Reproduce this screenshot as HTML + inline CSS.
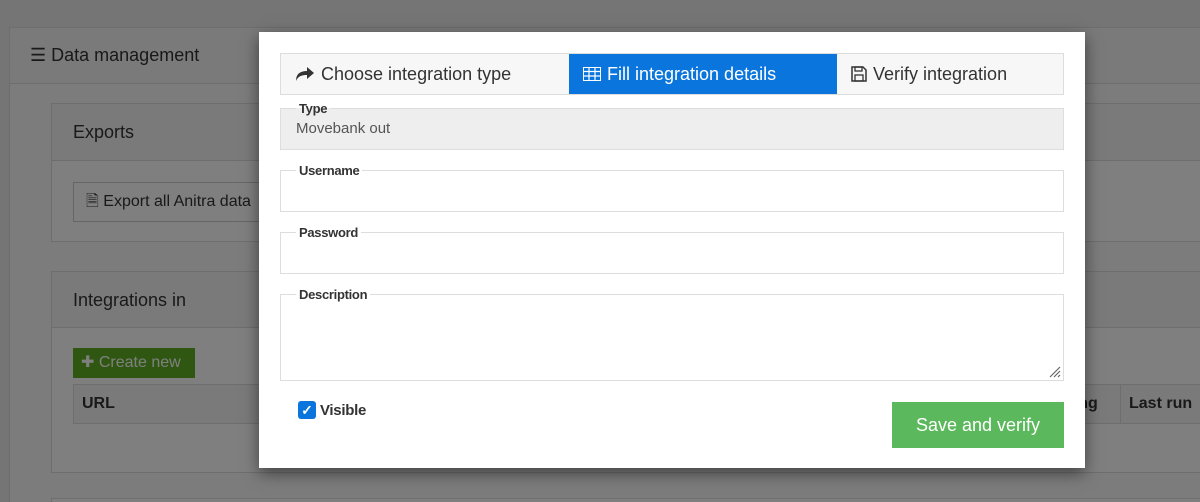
<!DOCTYPE html>
<html style="width:1200px;height:502px;overflow:hidden"><head><style>
*{box-sizing:border-box;margin:0;padding:0}
body{width:1200px;height:502px;overflow:hidden;position:relative;font-family:"Liberation Sans",sans-serif;background:#ebebeb;color:#333}
.abs{position:absolute}
.panel{position:absolute;background:#fff;border:1px solid #ddd;border-right:none}
.hd{position:absolute;left:0;right:0;top:0;background:#f5f5f5;border-bottom:1px solid #ddd;font-size:18px;padding-left:21px}
.ov{position:absolute;left:0;top:0;width:1200px;height:502px;background:rgba(0,0,0,.5)}
.modal{position:absolute;left:259px;top:32px;width:826px;height:436px;background:#fff;box-shadow:0 5px 15px rgba(0,0,0,.5)}
.tabs{position:absolute;left:21px;top:21px;width:784px;height:42px;border:1px solid #ddd;background:#f7f7f7;display:flex;font-size:18px}
.tab{display:flex;align-items:center;padding-left:14px;color:#333}
.tab svg{margin-right:6px}
fieldset{position:absolute;left:21px;width:784px;border:1px solid #ddd;padding:0 0 0 15px}
legend{font-size:13px;font-weight:bold;padding:0 3px;color:#333;letter-spacing:-.3px}
</style></head><body>
<div class="panel" style="left:9px;top:27px;width:1191px;height:475px;background:#f8f8f8;border-bottom:none">
 <div class="hd" style="height:56px;line-height:54px;padding-left:20px;font-size:18px">☰ Data management</div>
</div>
<div class="panel" style="left:51px;top:103px;width:1149px;height:139px">
 <div class="hd" style="height:57px;line-height:57px">Exports</div>
 <div class="abs" style="left:21px;top:78px;width:300px;height:40px;border:1px solid #ccc;font-size:16px;line-height:38px;padding-left:12px">🗎 Export all Anitra data</div>
</div>
<div class="panel" style="left:51px;top:271px;width:1149px;height:202px">
 <div class="hd" style="height:56px;line-height:56px">Integrations in</div>
 <div class="abs" style="left:21px;top:76px;width:122px;height:30px;background:#5eae22;color:#fff;font-size:16px;line-height:30px;padding-left:8px">✚ Create new</div>
 <div class="abs" style="left:21px;top:112px;width:1128px;height:40px;border:1px solid #ddd;border-right:none;background:#f5f5f5;font-size:16px;font-weight:bold;line-height:38px;padding-left:8px">URL
  <span class="abs" style="left:990px;top:0">ning</span><span class="abs" style="left:1046px;top:0;border-left:1px solid #ddd;padding-left:8px">Last run</span></div>
</div>
<div class="panel" style="left:51px;top:498px;width:1149px;height:4px;border-bottom:none"></div>
<div class="ov"></div>
<div class="modal">
 <div class="tabs">
  <div class="tab" style="width:288px"><svg width="20" height="16" viewBox="0 0 20 16"><path d="M1 15C1 8 5 5 12 5V1l7 6-7 6V9C7 9 3 10 1 15z" fill="#333"/></svg>Choose integration type</div>
  <div class="tab" style="width:268px;background:#0a75dc;color:#fff"><svg width="18" height="14" viewBox="0 0 18 14"><rect x="0.5" y="0.5" width="17" height="13" fill="none" stroke="#fff"/><path d="M0 4.5h18M0 9h18M6 0v14M12 0v14" stroke="#fff" stroke-width="1.2"/></svg>Fill integration details</div>
  <div class="tab" style="flex:1"><svg width="16" height="16" viewBox="0 0 16 16"><path d="M1 1h11l3 3v11H1z" fill="none" stroke="#333" stroke-width="1.5"/><rect x="4" y="1" width="7" height="4" fill="none" stroke="#333" stroke-width="1.3"/><rect x="4" y="9" width="8" height="6" fill="none" stroke="#333" stroke-width="1.3"/></svg>Verify integration</div>
 </div>
 <fieldset style="top:69px;height:49px;background:#eee"><legend>Type</legend><div style="font-size:15px;color:#555;margin-top:4px">Movebank out</div></fieldset>
 <fieldset style="top:131px;height:49px"><legend>Username</legend></fieldset>
 <fieldset style="top:193px;height:49px"><legend>Password</legend></fieldset>
 <fieldset style="top:255px;height:94px"><legend>Description</legend>
  <svg class="abs" style="right:2px;bottom:2px" width="14" height="14"><path d="M13 3L3 13M13 7L7 13M13 11L11 13" stroke="#666" stroke-width="1.2"/></svg></fieldset>
 <div class="abs" style="left:39px;top:369px;width:18px;height:18px;background:#0a75dc;border-radius:3px;color:#fff;font-size:14px;line-height:18px;text-align:center;font-weight:bold">✓</div>
 <div class="abs" style="left:61px;top:370px;font-size:15px;font-weight:bold;letter-spacing:-.3px">Visible</div>
 <div class="abs" style="left:633px;top:370px;width:172px;height:46px;background:#5cb85c;color:#fff;font-size:18px;line-height:46px;text-align:center">Save and verify</div>
</div>
</body></html>
